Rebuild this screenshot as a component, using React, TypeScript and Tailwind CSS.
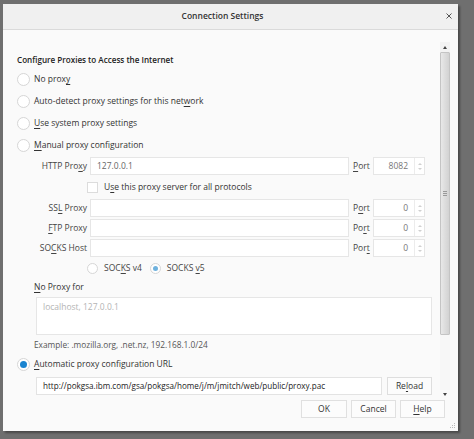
import React from 'react';

const Radio = ({ checked = false, small = false }: { checked?: boolean; small?: boolean }) => (
  <span
    className={`flex shrink-0 items-center justify-center rounded-full border border-[#d6d6d6] bg-white ${
      small ? 'h-[11px] w-[11px]' : 'h-[13px] w-[13px]'
    }`}
  >
    {checked && <span className={`rounded-full bg-[#1a84d0] ${small ? 'h-[5px] w-[5px] bg-[#6fb2de]' : 'h-[7px] w-[7px]'}`} />}
  </span>
);

const Key = ({ children }: { children: React.ReactNode }) => (
  <u className="decoration-[0.5px] underline-offset-[1.5px]">{children}</u>
);

const PortBox = ({ value }: { value: string }) => (
  <div className="flex h-[18px] w-[52px] border border-[#e6e6e6] bg-white">
    <span className="flex-1 pr-[6px] text-right leading-[16px] text-[#777]">{value}</span>
    <span className="flex w-[10px] flex-col items-center justify-center gap-[3px] border-l border-[#ececec]">
      <svg width="4" height="2" viewBox="0 0 4 2"><path d="M0 2 L2 0 L4 2Z" fill="#d0d0d0" /></svg>
      <svg width="4" height="2" viewBox="0 0 4 2"><path d="M0 0 L2 2 L4 0Z" fill="#d0d0d0" /></svg>
    </span>
  </div>
);

const ProxyRow = ({ label, value, port, portLabel }: { label: React.ReactNode; value?: string; port: string; portLabel: React.ReactNode }) => (
  <div className="flex h-[20px] items-center">
    <span className="w-[53px] whitespace-nowrap text-right text-[#444]">{label}</span>
    <div className="ml-[3px] h-[18px] w-[259px] border border-[#e6e6e6] bg-white pl-[6px] leading-[16px] text-[#666]">{value}</div>
    <span className="ml-[4px] w-[20px] text-[#444]">{portLabel}</span>
    <PortBox value={port} />
  </div>
);

export default function App() {
  return (
    <div className="h-[439px] w-[474px] overflow-hidden bg-[#6f6f6f] pl-[3px] pt-[4px] font-['Open_Sans',sans-serif] text-[8.5px] text-[#333]">
      <div className="flex h-[427px] w-[455px] flex-col bg-[#fafafa] shadow-[2px_2px_2px_rgba(0,0,0,0.35)]">
        {/* Title bar */}
        <div className="relative flex h-[26px] shrink-0 items-center justify-center border-b border-[#dadada] bg-[#f0f0f0] pr-[16px]">
          <span className="text-[8.5px] font-semibold text-[#333]">Connection Settings</span>
          <svg className="absolute right-[6px] top-[9px]" width="6" height="6" viewBox="0 0 6 6">
            <path d="M0.5 0.5 L5.5 5.5 M5.5 0.5 L0.5 5.5" stroke="#555" strokeWidth="1" />
          </svg>
        </div>

        {/* Scrolling body */}
        <div className="flex h-[368px] shrink-0 overflow-hidden">
          <div className="w-[434px] pl-[14px] pt-[23px]">
            <h2 className="h-[15px] text-[8.1px] font-semibold leading-[14px] text-[#222]">Configure Proxies to Access the Internet</h2>
            <div className="flex h-[22px] items-center gap-[4px]">
              <Radio />
              <span>No prox<Key>y</Key></span>
            </div>
            <div className="flex h-[22px] items-center gap-[4px]">
              <Radio />
              <span>Auto-detect proxy settings for this net<Key>w</Key>ork</span>
            </div>
            <div className="flex h-[22px] items-center gap-[4px]">
              <Radio />
              <span><Key>U</Key>se system proxy settings</span>
            </div>
            <div className="flex h-[22px] items-center gap-[4px]">
              <Radio />
              <span><Key>M</Key>anual proxy configuration</span>
            </div>

            <div className="pl-[17px]">
              <ProxyRow label={<>HTTP Pro<Key>x</Key>y</>} value="127.0.0.1" port="8082" portLabel={<><Key>P</Key>ort</>} />
              <div className="flex h-[22px] items-center gap-[6px] pl-[53px]">
                <span className="h-[11px] w-[11px] border border-[#dcdcdc] bg-white" />
                <span>U<Key>s</Key>e this proxy server for all protocols</span>
              </div>
              <ProxyRow label={<>SS<Key>L</Key> Proxy</>} port="0" portLabel={<>P<Key>o</Key>rt</>} />
              <ProxyRow label={<><Key>F</Key>TP Proxy</>} port="0" portLabel={<>Po<Key>r</Key>t</>} />
              <ProxyRow label={<>SO<Key>C</Key>KS Host</>} port="0" portLabel={<>Por<Key>t</Key></>} />
              <div className="flex h-[20px] items-center pl-[53px]">
                <Radio small />
                <span className="ml-[6px] text-[#444]">SOC<Key>K</Key>S v4</span>
                <span className="ml-[8px]"><Radio small checked /></span>
                <span className="ml-[6px] text-[#444]">SOCKS <Key>v</Key>5</span>
              </div>
            </div>

            <div className="flex h-[18px] items-center pl-[17px]">
              <span><Key>N</Key>o Proxy for</span>
            </div>
            <div className="ml-[19px] mt-[1px] h-[38px] w-[396px] border border-[#e6e6e6] bg-white pl-[6px] pt-[3px] text-[#b4b4b4]">
              localhost, 127.0.0.1
            </div>
            <div className="flex h-[20px] items-center pl-[17px] text-[8.3px] text-[#555]">
              Example: .mozilla.org, .net.nz, 192.168.1.0/24
            </div>
            <div className="flex h-[19px] items-center gap-[4px]">
              <Radio checked />
              <span><Key>A</Key>utomatic proxy configuration URL</span>
            </div>
            <div className="ml-[19px] mt-[3px] flex items-center gap-[5px]">
              <div className="h-[18px] w-[346px] border border-[#e3e3e3] bg-white pl-[6px] text-[8.1px] leading-[16px] text-[#222]">
                http://pokgsa.ibm.com/gsa/pokgsa/home/j/m/jmitch/web/public/proxy.pac
              </div>
              <button className="h-[18px] w-[45px] border border-[#dedede] bg-[#fcfcfc] leading-[16px] text-[#333]">
                Re<Key>l</Key>oad
              </button>
            </div>
          </div>

          {/* Scrollbar */}
          <div className="ml-[3px] mt-[12px] flex w-[10px] flex-col">
            <div className="flex h-[10px] items-center justify-center bg-[#f3f3f3]">
              <svg width="4" height="3" viewBox="0 0 4 3"><path d="M0 3 L2 0 L4 3Z" fill="#444" /></svg>
            </div>
            <div className="flex h-[283px] items-center justify-center rounded-[1px] border border-[#c4c4c4] bg-gradient-to-r from-[#e8e8e8] to-[#d2d2d2]">
              <div className="flex flex-col gap-[1px]">
                <span className="h-px w-[4px] bg-[#999]" />
                <span className="h-px w-[4px] bg-[#999]" />
                <span className="h-px w-[4px] bg-[#999]" />
              </div>
            </div>
            <div className="h-[55px] bg-[#f7f7f7]" />
            <div className="flex h-[8px] items-center justify-center">
              <svg width="4" height="3" viewBox="0 0 4 3"><path d="M0 0 L2 3 L4 0Z" fill="#444" /></svg>
            </div>
          </div>
        </div>

        {/* Footer buttons */}
        <div className="relative flex flex-1 items-start justify-end gap-[4px] pr-[13px] pt-[2px]">
          <button className="h-[18px] w-[46px] border border-[#e0e0e0] bg-[#fcfcfc] text-[#333]">OK</button>
          <button className="h-[18px] w-[45px] border border-[#e0e0e0] bg-[#fcfcfc] text-[#333]">Cancel</button>
          <button className="h-[18px] w-[45px] border border-[#e0e0e0] bg-[#fcfcfc] text-[#333]"><Key>H</Key>elp</button>
          <svg className="absolute bottom-[2px] right-[2px]" width="6" height="6" viewBox="0 0 6 6">
            <rect x="4" y="0" width="1" height="1" fill="#bbb" />
            <rect x="2" y="2" width="1" height="1" fill="#bbb" />
            <rect x="4" y="2" width="1" height="1" fill="#bbb" />
            <rect x="0" y="4" width="1" height="1" fill="#bbb" />
            <rect x="2" y="4" width="1" height="1" fill="#bbb" />
            <rect x="4" y="4" width="1" height="1" fill="#bbb" />
          </svg>
        </div>
      </div>
    </div>
  );
}
